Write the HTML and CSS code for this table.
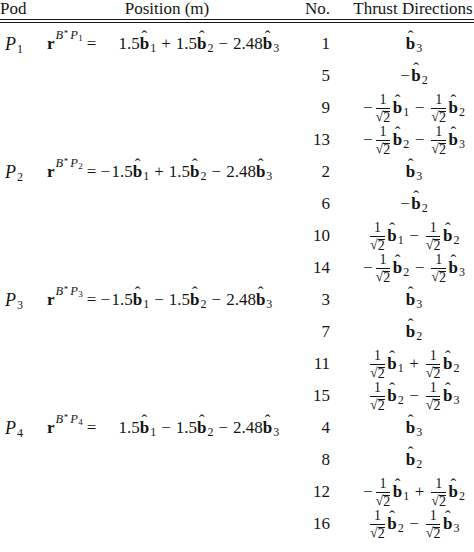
FILE: index.html
```html
<!DOCTYPE html>
<html lang="en">
<head>
<meta charset="utf-8">
<title>Pod thrust directions</title>
<link rel="stylesheet" href="styles.css">
</head>
<body>
<div class="table">
  <div class="cols head">
    <div class="h-pod">Pod</div>
    <div class="h-pos">Position (m)</div>
    <div class="h-no">No.</div>
    <div class="h-dir">Thrust Directions</div>
  </div>
  <div class="rule"></div>
  <div class="cols body">
    <!-- P1 -->
    <div class="pod"><i class="mi">P</i><span class="ps">1</span></div>
    <div class="pos"><span class="rv">r</span><span class="sup"><i class="mi">B</i><span class="star">*</span><i class="mi">P</i><span class="ss">1</span></span><span class="eq">=</span><span class="ph"></span>1.5<span class="hat">b</span><span class="sb">1</span><span class="op">+</span>1.5<span class="hat">b</span><span class="sb">2</span><span class="op">−</span>2.48<span class="hat">b</span><span class="sb">3</span></div>
    <div class="no">1</div>
    <div class="dir"><span class="hat">b</span><span class="sb">3</span></div>
    <div class="no">5</div>
    <div class="dir"><span class="un">−</span><span class="hat">b</span><span class="sb">2</span></div>
    <div class="no">9</div>
    <div class="dir"><span class="un">−</span><span class="frac"><span class="num">1</span><span class="den"><span class="rad">√</span><span class="rc">2</span></span></span><span class="hat">b</span><span class="sb">1</span><span class="op">−</span><span class="frac"><span class="num">1</span><span class="den"><span class="rad">√</span><span class="rc">2</span></span></span><span class="hat">b</span><span class="sb">2</span></div>
    <div class="no">13</div>
    <div class="dir"><span class="un">−</span><span class="frac"><span class="num">1</span><span class="den"><span class="rad">√</span><span class="rc">2</span></span></span><span class="hat">b</span><span class="sb">2</span><span class="op">−</span><span class="frac"><span class="num">1</span><span class="den"><span class="rad">√</span><span class="rc">2</span></span></span><span class="hat">b</span><span class="sb">3</span></div>

    <!-- P2 -->
    <div class="pod"><i class="mi">P</i><span class="ps">2</span></div>
    <div class="pos"><span class="rv">r</span><span class="sup"><i class="mi">B</i><span class="star">*</span><i class="mi">P</i><span class="ss">2</span></span><span class="eq">=</span><span class="un">−</span>1.5<span class="hat">b</span><span class="sb">1</span><span class="op">+</span>1.5<span class="hat">b</span><span class="sb">2</span><span class="op">−</span>2.48<span class="hat">b</span><span class="sb">3</span></div>
    <div class="no">2</div>
    <div class="dir"><span class="hat">b</span><span class="sb">3</span></div>
    <div class="no">6</div>
    <div class="dir"><span class="un">−</span><span class="hat">b</span><span class="sb">2</span></div>
    <div class="no">10</div>
    <div class="dir"><span class="frac"><span class="num">1</span><span class="den"><span class="rad">√</span><span class="rc">2</span></span></span><span class="hat">b</span><span class="sb">1</span><span class="op">−</span><span class="frac"><span class="num">1</span><span class="den"><span class="rad">√</span><span class="rc">2</span></span></span><span class="hat">b</span><span class="sb">2</span></div>
    <div class="no">14</div>
    <div class="dir"><span class="un">−</span><span class="frac"><span class="num">1</span><span class="den"><span class="rad">√</span><span class="rc">2</span></span></span><span class="hat">b</span><span class="sb">2</span><span class="op">−</span><span class="frac"><span class="num">1</span><span class="den"><span class="rad">√</span><span class="rc">2</span></span></span><span class="hat">b</span><span class="sb">3</span></div>

    <!-- P3 -->
    <div class="pod"><i class="mi">P</i><span class="ps">3</span></div>
    <div class="pos"><span class="rv">r</span><span class="sup"><i class="mi">B</i><span class="star">*</span><i class="mi">P</i><span class="ss">3</span></span><span class="eq">=</span><span class="un">−</span>1.5<span class="hat">b</span><span class="sb">1</span><span class="op">−</span>1.5<span class="hat">b</span><span class="sb">2</span><span class="op">−</span>2.48<span class="hat">b</span><span class="sb">3</span></div>
    <div class="no">3</div>
    <div class="dir"><span class="hat">b</span><span class="sb">3</span></div>
    <div class="no">7</div>
    <div class="dir"><span class="hat">b</span><span class="sb">2</span></div>
    <div class="no">11</div>
    <div class="dir"><span class="frac"><span class="num">1</span><span class="den"><span class="rad">√</span><span class="rc">2</span></span></span><span class="hat">b</span><span class="sb">1</span><span class="op">+</span><span class="frac"><span class="num">1</span><span class="den"><span class="rad">√</span><span class="rc">2</span></span></span><span class="hat">b</span><span class="sb">2</span></div>
    <div class="no">15</div>
    <div class="dir"><span class="frac"><span class="num">1</span><span class="den"><span class="rad">√</span><span class="rc">2</span></span></span><span class="hat">b</span><span class="sb">2</span><span class="op">−</span><span class="frac"><span class="num">1</span><span class="den"><span class="rad">√</span><span class="rc">2</span></span></span><span class="hat">b</span><span class="sb">3</span></div>

    <!-- P4 -->
    <div class="pod"><i class="mi">P</i><span class="ps">4</span></div>
    <div class="pos"><span class="rv">r</span><span class="sup"><i class="mi">B</i><span class="star">*</span><i class="mi">P</i><span class="ss">4</span></span><span class="eq">=</span><span class="ph"></span>1.5<span class="hat">b</span><span class="sb">1</span><span class="op">−</span>1.5<span class="hat">b</span><span class="sb">2</span><span class="op">−</span>2.48<span class="hat">b</span><span class="sb">3</span></div>
    <div class="no">4</div>
    <div class="dir"><span class="hat">b</span><span class="sb">3</span></div>
    <div class="no">8</div>
    <div class="dir"><span class="hat">b</span><span class="sb">2</span></div>
    <div class="no">12</div>
    <div class="dir"><span class="un">−</span><span class="frac"><span class="num">1</span><span class="den"><span class="rad">√</span><span class="rc">2</span></span></span><span class="hat">b</span><span class="sb">1</span><span class="op">+</span><span class="frac"><span class="num">1</span><span class="den"><span class="rad">√</span><span class="rc">2</span></span></span><span class="hat">b</span><span class="sb">2</span></div>
    <div class="no">16</div>
    <div class="dir"><span class="frac"><span class="num">1</span><span class="den"><span class="rad">√</span><span class="rc">2</span></span></span><span class="hat">b</span><span class="sb">2</span><span class="op">−</span><span class="frac"><span class="num">1</span><span class="den"><span class="rad">√</span><span class="rc">2</span></span></span><span class="hat">b</span><span class="sb">3</span></div>
  </div>
</div>
</body>
</html>
```

FILE: styles.css
```css
html, body {
  margin: 0;
  padding: 0;
  background: #ffffff;
}

body {
  width: 474px;
  height: 552px;
  overflow: hidden;
  font-family: "Liberation Serif", "Times New Roman", serif;
  font-size: 17px;
  color: #151515;
}

.table {
  width: 500px;
}

.cols {
  display: grid;
  grid-template-columns: 44px 246px 40px 166px;
}

.head {
  line-height: 17px;
  padding-bottom: 2px;
}

.h-pos {
  text-align: center;
}

.h-no {
  text-align: right;
}

.h-dir {
  text-align: center;
}

.rule {
  height: 2px;
  border-top: 1px solid #151515;
  border-bottom: 1px solid #151515;
}

.body {
  padding-top: 5px;
  grid-auto-rows: 32px;
  line-height: 32px;
  white-space: nowrap;
}

.mi {
  font-family: "Liberation Serif", "Times New Roman", serif;
  font-style: italic;
}

.pod {
  grid-row: span 4;
  padding-left: 5px;
}

.pod .mi {
  font-size: 18px;
}

.pos {
  grid-row: span 4;
  padding-left: 3px;
}

.no {
  text-align: right;
}

.dir {
  text-align: center;
  padding-left: 2px;
}

.ps {
  font-size: 12px;
  vertical-align: -3px;
  line-height: 0;
  margin-left: 1px;
}

.rv {
  font-weight: bold;
}

.sup {
  font-size: 12.5px;
  vertical-align: 10px;
  line-height: 0;
  margin-left: 1px;
}

.star {
  font-size: 9px;
  vertical-align: 3px;
  margin: 0 2px 0 0.5px;
}

.ss {
  font-size: 9px;
  vertical-align: -2px;
  margin-left: 0.5px;
}

.eq {
  margin: 0 4px;
}

.ph {
  display: inline-block;
  width: 18px;
}

.op {
  margin: 0 5px;
}

.dir .op {
  margin: 0 5.5px;
}

.un {
  margin-right: 1.5px;
}

.hat {
  position: relative;
  display: inline-block;
  font-weight: bold;
  line-height: 1;
}

.hat::before {
  content: "\02C6";
  position: absolute;
  left: 0;
  right: 0;
  top: -7px;
  text-align: center;
  font-weight: normal;
  font-size: 17px;
}

.sb {
  font-size: 12px;
  vertical-align: -3px;
  line-height: 0;
  margin-left: 1px;
}

.frac {
  display: inline-flex;
  flex-direction: column;
  align-items: center;
  vertical-align: 9px;
  font-size: 14px;
  line-height: 1;
  margin: 0 2.5px 0 1.5px;
}

.num {
  align-self: stretch;
  text-align: center;
  border-bottom: 1px solid #151515;
  padding-bottom: 1px;
}

.den {
  display: flex;
  align-items: flex-start;
  padding-top: 1px;
}

.rad {
  line-height: 13px;
}

.rc {
  border-top: 1px solid #151515;
  line-height: 12px;
  margin-top: 1px;
}
```
